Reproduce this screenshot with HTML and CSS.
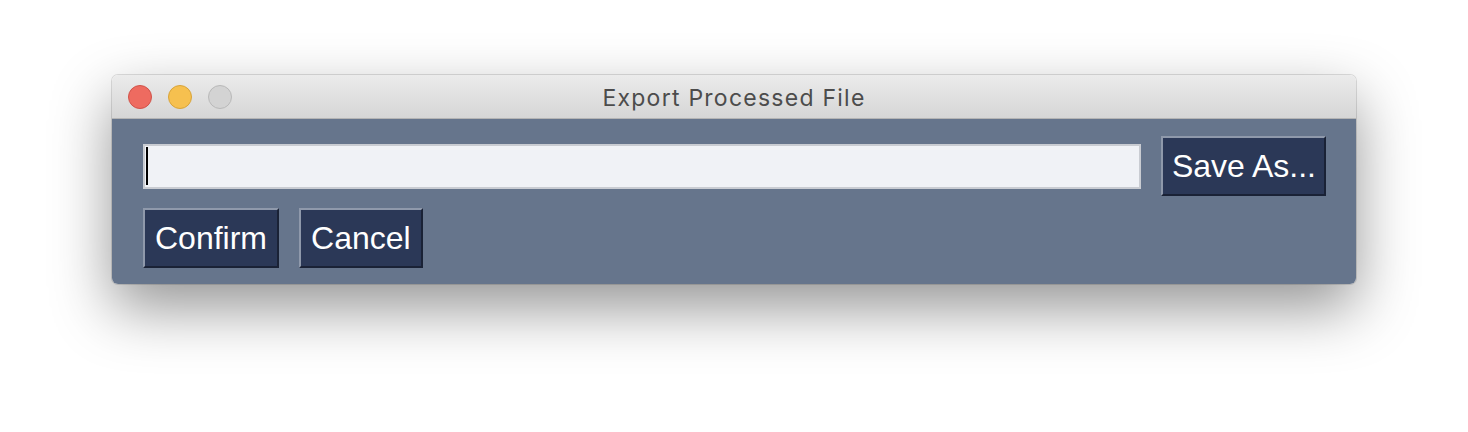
FILE: index.html
```html
<!DOCTYPE html>
<html>
<head>
<meta charset="utf-8">
<link rel="stylesheet" href="styles.css">
</head>
<body>
<div class="window">
  <div class="titlebar">
    <div class="lights">
      <span class="light red"></span>
      <span class="light yellow"></span>
      <span class="light gray"></span>
    </div>
    <div class="title">Export Processed File</div>
  </div>
  <div class="content">
    <div class="row">
      <div class="entry"><span class="cursor"></span></div>
      <div class="btn btn-save">Save As...</div>
    </div>
    <div class="row">
      <div class="btn">Confirm</div>
      <div class="btn">Cancel</div>
    </div>
  </div>
</div>
</body>
</html>
```
FILE: styles.css
```css
html, body {
  margin: 0;
  padding: 0;
  background: #ffffff;
}
body {
  width: 1468px;
  height: 432px;
  overflow: hidden;
  font-family: "Liberation Sans", Arial, sans-serif;
}
.window {
  margin: 75px 0 0 112px;
  width: 1244px;
  border-radius: 6px;
  overflow: hidden;
  box-shadow: 0 0 0 1px rgba(0,0,0,0.12), 0 24px 60px rgba(0,0,0,0.42);
}
.titlebar {
  position: relative;
  height: 43px;
  background: linear-gradient(#ebebeb, #d6d6d6);
  border-bottom: 1px solid #b4b4b4;
  display: flex;
  align-items: center;
  justify-content: center;
}
.lights {
  position: absolute;
  left: 16px;
  top: 10px;
  display: flex;
  gap: 16px;
}
.light {
  width: 22px;
  height: 22px;
  border-radius: 50%;
  display: block;
}
.red { background: #ee6b60; border: 1px solid #d0534a; }
.yellow { background: #f6c04f; border: 1px solid #d8a43a; }
.gray { background: #d3d3d3; border: 1px solid #b9b9b9; }
.title {
  font-family: Inter, "Liberation Sans", sans-serif;
  font-size: 23px;
  letter-spacing: 1.25px;
  color: #4c4c4c;
  margin-top: 2px;
}
.content {
  background: #66758c;
  padding: 17px 30px 16px 31px;
  display: flex;
  flex-direction: column;
  gap: 12px;
}
.row {
  display: flex;
  align-items: center;
  gap: 20px;
}
.entry {
  flex: 1;
  height: 41px;
  background: #f0f2f6;
  border: 2px solid #c9ccd2;
  display: flex;
  align-items: center;
  padding-left: 1px;
}
.cursor {
  width: 2px;
  height: 38px;
  background: #000;
  display: block;
}
.btn {
  height: 56px;
  box-sizing: content-box;
  padding: 0 10px 0 10px;
  background: #2b3857;
  color: #ffffff;
  font-size: 32px;
  line-height: 56px;
  border-top: 2px solid #8f99ab;
  border-left: 2px solid #8f99ab;
  border-right: 2px solid #1a2236;
  border-bottom: 2px solid #1a2236;
}
.btn-save {
  padding: 0 8px 0 9px;
}
```
